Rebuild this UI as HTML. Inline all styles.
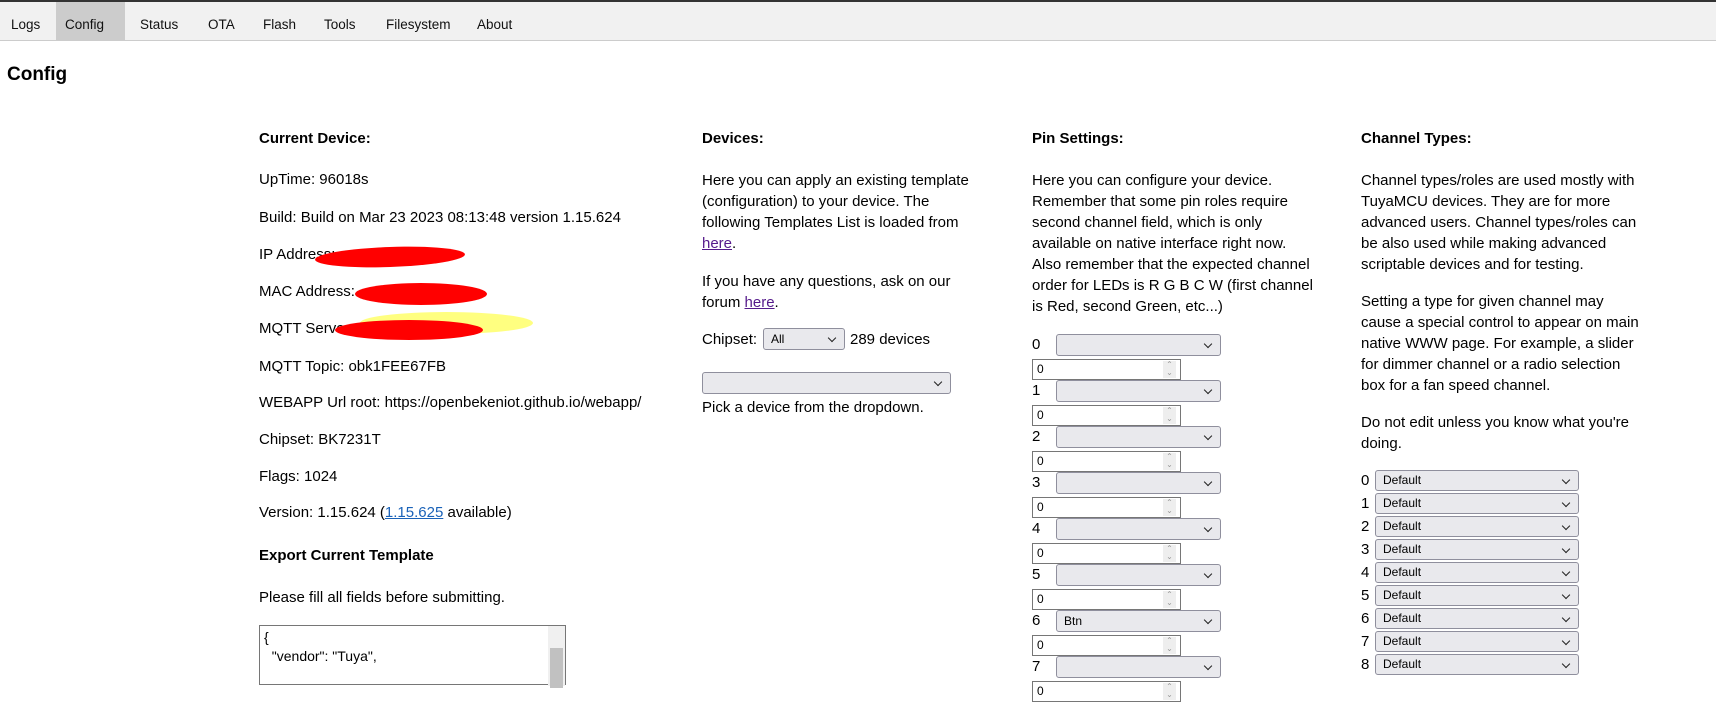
<!DOCTYPE html>
<html><head><meta charset="utf-8"><style>
*{box-sizing:border-box}
body{margin:0;width:1716px;height:668px;overflow:hidden;background:#fff;font-family:"Segoe UI","Liberation Sans",sans-serif;color:#000;position:relative}
.nav{position:absolute;left:0;top:0;width:1716px;height:41px;background:#f1f1f1;border-top:2px solid #333;border-bottom:1px solid #ccc}
.tab{position:absolute;top:0;height:39px;line-height:45px;font-size:13.5px;color:#111}
.t{position:absolute;font-size:15px;line-height:21px;white-space:nowrap}
b.t{font-weight:bold}
a{color:#551a8b}
.sel{position:absolute;height:22px;background:#e9e9ed;border:1px solid #8f8f9d;border-radius:3px;font-size:12px;line-height:20px;padding-left:7px}
.sel:after{content:"";position:absolute;right:9px;top:6px;width:5px;height:5px;border-right:1.5px solid #222;border-bottom:1.5px solid #222;transform:rotate(45deg)}
.num{position:absolute;height:21px;width:149px;background:#fff;border:1px solid #767676;font-size:12px;line-height:19px;padding-left:4px}
.num:after{content:"⌃\A⌄";white-space:pre;position:absolute;right:4px;top:1px;width:13px;height:17px;background:#eee;color:#999;font-size:8px;line-height:8px;text-align:center}
.blob{position:absolute;border-radius:50%}
</style></head><body>
<div class="nav">
<div class="tab" style="left:56px;width:69px;background:#ccc"></div>
<div class="tab" style="left:11px">Logs</div>
<div class="tab" style="left:65px">Config</div>
<div class="tab" style="left:140px">Status</div>
<div class="tab" style="left:208px">OTA</div>
<div class="tab" style="left:263px">Flash</div>
<div class="tab" style="left:324px">Tools</div>
<div class="tab" style="left:386px">Filesystem</div>
<div class="tab" style="left:477px">About</div>
</div>
<div class="t" style="left:7px;top:62px;font-size:19px;line-height:26px;font-weight:bold">Config</div>

<b class="t" style="left:259px;top:128px">Current Device:</b>
<div class="t" style="left:259px;top:169px">UpTime: 96018s</div>
<div class="t" style="left:259px;top:207px">Build: Build on Mar 23 2023 08:13:48 version 1.15.624</div>
<div class="t" style="left:259px;top:244px">IP Address:</div>
<div class="t" style="left:259px;top:281px">MAC Address:</div>
<div class="t" style="left:259px;top:318px">MQTT Server:</div>
<div class="t" style="left:259px;top:356px">MQTT Topic: obk1FEE67FB</div>
<div class="t" style="left:259px;top:392px">WEBAPP Url root: https://openbekeniot.github.io/webapp/</div>
<div class="t" style="left:259px;top:429px">Chipset: BK7231T</div>
<div class="t" style="left:259px;top:466px">Flags: 1024</div>
<div class="t" style="left:259px;top:502px">Version: 1.15.624 (<a href="#" style="color:#1a62b8">1.15.625</a> available)</div>
<b class="t" style="left:259px;top:545px">Export Current Template</b>
<div class="t" style="left:259px;top:587px">Please fill all fields before submitting.</div>
<div style="position:absolute;left:259px;top:625px;width:307px;height:60px;border:1px solid #767676;font-size:14px;line-height:19px;padding:2px 4px">{<br>&nbsp;&nbsp;"vendor": "Tuya",
<div style="position:absolute;right:0;top:0;width:17px;height:60px;background:#f0f0f0"><div style="margin:22px 2px 0;height:40px;background:#c1c1c1"></div></div></div>
<div class="blob" style="left:315px;top:247px;width:150px;height:20px;background:#f00;transform:rotate(-2deg)"></div>
<div class="blob" style="left:355px;top:283px;width:132px;height:22px;background:#f00"></div>
<div class="blob" style="left:360px;top:312px;width:173px;height:22px;background:#ffff80"></div>
<div class="blob" style="left:335px;top:320px;width:148px;height:20px;background:#f00"></div>

<b class="t" style="left:702px;top:128px">Devices:</b>
<div class="t" style="left:702px;top:170px">Here you can apply an existing template<br>(configuration) to your device. The<br>following Templates List is loaded from<br><a href="#">here</a>.</div>
<div class="t" style="left:702px;top:271px">If you have any questions, ask on our<br>forum <a href="#">here</a>.</div>
<div class="t" style="left:702px;top:329px">Chipset:</div>
<div class="sel" style="left:763px;top:328px;width:82px">All</div>
<div class="t" style="left:850px;top:329px">289 devices</div>
<div class="sel" style="left:702px;top:372px;width:249px"></div>
<div class="t" style="left:702px;top:397px">Pick a device from the dropdown.</div>

<b class="t" style="left:1032px;top:128px">Pin Settings:</b>
<div class="t" style="left:1032px;top:170px">Here you can configure your device.<br>Remember that some pin roles require<br>second channel field, which is only<br>available on native interface right now.<br>Also remember that the expected channel<br>order for LEDs is R G B C W (first channel<br>is Red, second Green, etc...)</div>

<b class="t" style="left:1361px;top:128px">Channel Types:</b>
<div class="t" style="left:1361px;top:170px">Channel types/roles are used mostly with<br>TuyaMCU devices. They are for more<br>advanced users. Channel types/roles can<br>be also used while making advanced<br>scriptable devices and for testing.</div>
<div class="t" style="left:1361px;top:291px">Setting a type for given channel may<br>cause a special control to appear on main<br>native WWW page. For example, a slider<br>for dimmer channel or a radio selection<br>box for a fan speed channel.</div>
<div class="t" style="left:1361px;top:412px">Do not edit unless you know what you're<br>doing.</div>

<div id="pins"></div>
<div id="ch"></div>
<script>
var p='';for(var i=0;i<8;i++){var y=334+46*i;
p+='<div class="t" style="left:1032px;top:'+(y)+'px">'+i+'</div><div class="sel" style="left:1056px;top:'+y+'px;width:165px">'+(i==6?'Btn':'')+'</div><div class="num" style="left:1032px;top:'+(y+25)+'px">0</div>';}
document.getElementById('pins').innerHTML=p;
var c='';for(var j=0;j<9;j++){var y2=470+23*j;
c+='<div class="t" style="left:1361px;top:'+y2+'px">'+j+'</div><div class="sel" style="left:1375px;top:'+y2+'px;width:204px;height:21px;line-height:19px">Default</div>';}
document.getElementById('ch').innerHTML=c;
</script>
</body></html>
